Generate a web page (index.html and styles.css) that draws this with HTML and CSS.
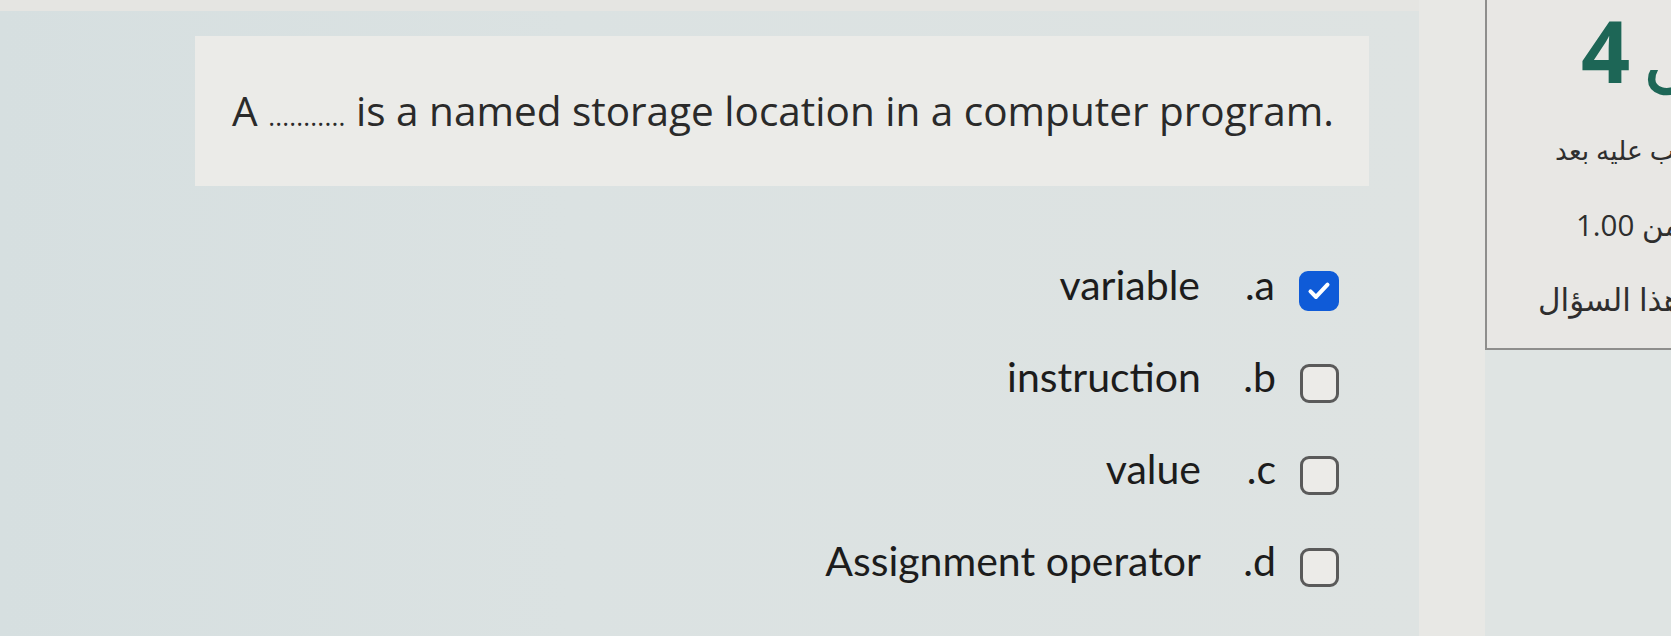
FILE: index.html
```html
<!DOCTYPE html>
<html lang="ar">
<head>
<meta charset="utf-8">
<title>Question 4</title>
<link rel="stylesheet" href="styles.css">
</head>
<body>
<div class="page">
  <main class="main">
    <div class="topstrip"></div>
    <div class="qtext" dir="ltr">A <span class="blank">...........</span> is a named storage location in a computer program.</div>
    <div class="answers" dir="rtl">
      <div class="ans">
        <span class="box checked"><svg viewBox="0 0 40 40" width="40" height="40"><path d="M10 20.5 L16.5 27 L30 12.5" fill="none" stroke="#ffffff" stroke-width="4.8" stroke-linecap="round" stroke-linejoin="round"/></svg></span>
        <span class="num">a.</span>
        <span class="txt">variable</span>
      </div>
      <div class="ans">
        <span class="box"></span>
        <span class="num">b.</span>
        <span class="txt">instruction</span>
      </div>
      <div class="ans">
        <span class="box"></span>
        <span class="num">c.</span>
        <span class="txt">value</span>
      </div>
      <div class="ans">
        <span class="box"></span>
        <span class="num">d.</span>
        <span class="txt">Assignment operator</span>
      </div>
    </div>
  </main>
  <div class="gutter"></div>
  <aside class="info" dir="rtl">
    <h3 class="no">السؤال <span class="qno">4</span></h3>
    <div class="state">لم يجب عليه بعد</div>
    <div class="grade">الدرجة من 1.00</div>
    <div class="flag">ضع علامة على هذا السؤال</div>
  </aside>
</div>
</body>
</html>
```

FILE: styles.css
```css
html, body {
  margin: 0;
  padding: 0;
  overflow: hidden;
}
body {
  width: 1671px;
  height: 636px;
  background: #dfe4e3;
}
.page {
  display: flex;
  width: 2100px;
  height: 636px;
}
.main {
  width: 1419px;
  flex: none;
  background: linear-gradient(90deg, #d6dfe0 0%, #dbe2e2 40%, #dee3e2 100%);
}
.topstrip {
  height: 11px;
  background: #e5e5e2;
}
.qtext {
  margin: 25px 0 0 195px;
  width: 1137px;
  height: 53px;
  padding: 48px 0 49px 37px;
  background: #ebebe8;
  font-family: "Open Sans", "Liberation Sans", sans-serif;
  font-size: 40.5px;
  line-height: 53px;
  color: #2a2a2a;
  white-space: nowrap;
}
.blank {
  font-size: 26px;
  letter-spacing: 0.2px;
}
.answers {
  width: 1339px;
  margin-top: 59px;
  font-family: Lato, "Liberation Sans", sans-serif;
  font-size: 41px;
  color: #1c1c1c;
}
.ans {
  display: flex;
  align-items: center;
  height: 92px;
}
.box {
  flex: none;
  box-sizing: border-box;
  width: 39px;
  height: 39px;
  border: 3px solid #5a5a5a;
  border-radius: 9px;
  background: #ecebe8;
  display: flex;
  align-items: center;
  justify-content: center;
}
.box.checked {
  width: 40px;
  height: 40px;
  background: #0f5bd8;
  border-color: #0f5bd8;
}
.box.checked svg {
  width: 38px;
  height: 38px;
}
.num, .txt {
  flex: none;
  line-height: 49px;
  padding-bottom: 14px;
}
.num {
  width: 44px;
  margin-right: 24px;
  margin-left: 31px;
  text-align: right;
}
.gutter {
  width: 66px;
  flex: none;
  background: #e8e8e5;
}
.info {
  flex: none;
  box-sizing: border-box;
  width: 520px;
  height: 350px;
  background: #e8e7e4;
  border-left: 2px solid #8e8e8c;
  border-bottom: 2px solid #8e8e8c;
  font-family: "Open Sans", "DejaVu Sans", sans-serif;
  color: #2e2e2e;
  text-align: left;
}
.no {
  margin: 0;
  height: 100px;
  padding-left: 94px;
  font-weight: normal;
  font-size: 84px;
  line-height: 100px;
  word-spacing: -10px;
  color: #1d6656;
  white-space: nowrap;
}
.qno {
  font-weight: bold;
  font-size: 86px;
}
.state {
  margin-top: 35px;
  padding-left: 68px;
  font-size: 26.5px;
  line-height: 30px;
  white-space: nowrap;
}
.grade {
  margin-top: 42px;
  padding-left: 89px;
  font-size: 29.5px;
  line-height: 36px;
  white-space: nowrap;
}
.flag {
  margin-top: 36px;
  padding-left: 51px;
  font-size: 31px;
  line-height: 40px;
  white-space: nowrap;
}
```
